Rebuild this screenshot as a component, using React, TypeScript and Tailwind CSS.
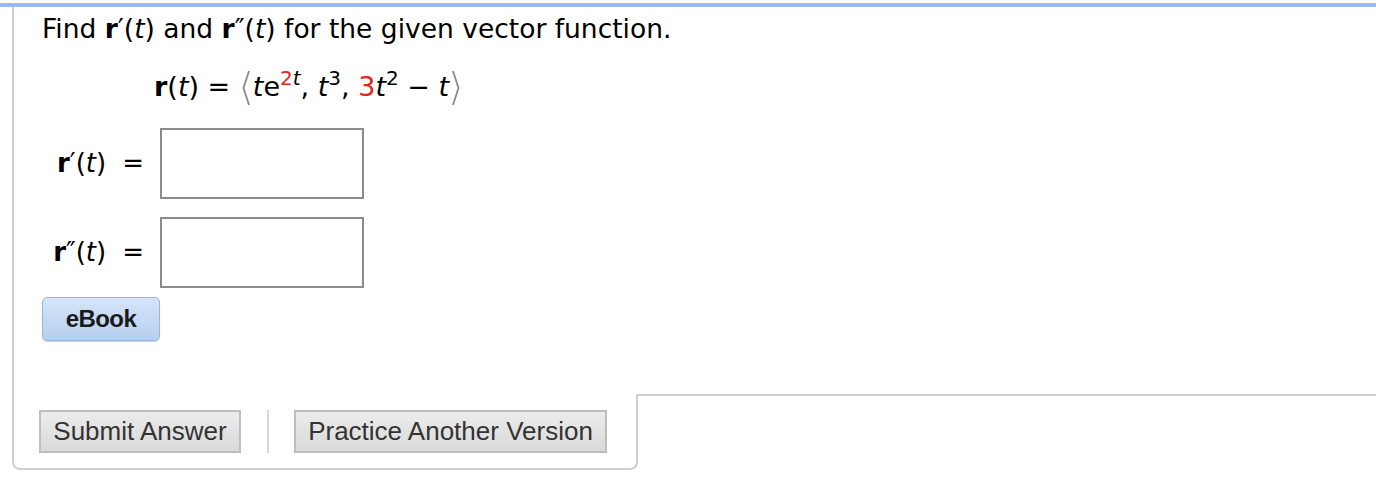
import React from 'react';

const font = { fontFamily: '"DejaVu Sans", Verdana, sans-serif' };
const arial = { fontFamily: '"Liberation Sans", Arial, sans-serif' };

const Sup = ({ children, red }: { children: React.ReactNode; red?: boolean }) => (
  <span className={`relative -top-[11px] text-[20px] leading-none ${red ? 'text-[#e0261b]' : ''}`}>
    {children}
  </span>
);

const T = () => <i className="italic">t</i>;

const Bracket = ({ side }: { side: 'l' | 'r' }) => (
  <svg width="10" height="36" viewBox="0 0 10 36" className="inline-block align-[-10px] mx-[2px]">
    <path
      d={side === 'l' ? 'M8 1 L2.5 18 L8 35' : 'M2 1 L7.5 18 L2 35'}
      fill="none"
      stroke="#8a8a8a"
      strokeWidth="1.8"
    />
  </svg>
);

function AnswerRow({ primes }: { primes: string }) {
  return (
    <div className="flex items-center">
      <div className="w-[118px] flex justify-end items-center text-[26px] text-black pr-[16px]" style={font}>
        <span>
          <b>r</b>
          {primes}(<T />)
        </span>
        <span className="ml-[16px]">=</span>
      </div>
      <input
        className="w-[204px] h-[71px] border-2 border-[#8c8c8c] bg-white outline-none"
        type="text"
      />
    </div>
  );
}

export default function App() {
  return (
    <div className="w-[1376px] h-[504px] bg-white overflow-hidden">
      <div className="h-[4px] mt-[3px] bg-[#9ab8f4]" />
      <div className="ml-[12px]">
        <div className="border-l-2 border-[#cfcfcf] pl-[28px] pt-[4px] pb-[53px]">
          <p className="text-[26.5px] text-black leading-[36px] whitespace-nowrap" style={font}>
            Find <b>r</b>′(<T />) and <b>r</b>″(<T />) for the given vector function.
          </p>
          <p className="ml-[112px] mt-[20px] h-[40px] text-[27px] text-black leading-[40px] whitespace-nowrap" style={font}>
            <b>r</b>(<T />) = <Bracket side="l" />
            <T />e<Sup red>2</Sup>
            <Sup>
              <i>t</i>
            </Sup>
            , <T />
            <Sup>3</Sup>, <span className="text-[#e0261b]">3</span>
            <T />
            <Sup>2</Sup> − <T />
            <Bracket side="r" />
          </p>
          <div className="mt-[21px] flex flex-col gap-[18px]">
            <AnswerRow primes="′" />
            <AnswerRow primes="″" />
          </div>
          <button
            className="mt-[9px] w-[118px] h-[44px] rounded-[5px] border border-[#9db6d8] bg-gradient-to-b from-[#d6e5f8] to-[#b6cff0] text-[24px] font-bold text-[#1a1a1a] shadow-[0_1px_1px_rgba(0,0,0,0.2)]"
            style={{ ...arial, letterSpacing: '-0.6px' }}
          >
            eBook
          </button>
        </div>
        <div className="flex">
          <div className="w-[626px] h-[76px] border-l-2 border-r-2 border-b-2 border-[#cfcfcf] rounded-b-[8px] flex items-center pl-[25px]">
            <button
              className="h-[43px] w-[202px] border-2 border-[#bdbdbd] bg-gradient-to-b from-[#ececec] to-[#d9d9d9] text-[26px] text-[#333] whitespace-nowrap"
              style={arial}
            >
              Submit Answer
            </button>
            <div className="w-[2px] h-[43px] bg-[#d6d6d6] ml-[26px] mr-[25px]" />
            <button
              className="h-[43px] w-[313px] border-2 border-[#bdbdbd] bg-gradient-to-b from-[#ececec] to-[#d9d9d9] text-[26px] text-[#333] whitespace-nowrap"
              style={arial}
            >
              Practice Another Version
            </button>
          </div>
          <div className="flex-1 border-t-2 border-[#cfcfcf] h-[76px]" />
        </div>
      </div>
    </div>
  );
}
